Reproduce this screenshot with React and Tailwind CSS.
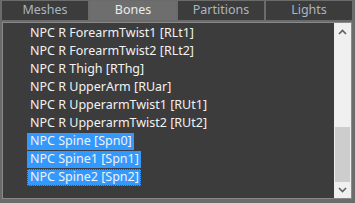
import React from "react";

const rows = [
  { t: "NPC R ForearmTwist1 [RLt1]" },
  { t: "NPC R ForearmTwist2 [RLt2]" },
  { t: "NPC R Thigh [RThg]" },
  { t: "NPC R UpperArm [RUar]" },
  { t: "NPC R UpperarmTwist1 [RUt1]" },
  { t: "NPC R UpperarmTwist2 [RUt2]" },
  { t: "NPC Spine [Spn0]", sel: true },
  { t: "NPC Spine1 [Spn1]", sel: true },
  { t: "NPC Spine2 [Spn2]", sel: true, focus: true },
];

const tabs = ["Meshes", "Bones", "Partitions", "Lights"];

export default function App() {
  return (
    <div
      className="w-[355px] h-[203px] bg-[#6b6b6b] overflow-hidden pl-[2px] pr-[3px] pt-[1px]"
      style={{ fontFamily: '"Segoe UI", "Noto Sans", "Open Sans", sans-serif' }}
    >
      <div className="flex gap-[2px] h-[19px]">
        {tabs.map((t, i) => (
          <div
            key={t}
            className={
              "w-[86px] h-[19px] flex items-center justify-center text-[12.5px] leading-none " +
              (i === 1 ? "bg-[#6e6e6e] text-[#ececec]" : "bg-[#3c3c3c] text-[#aab6c2]")
            }
          >
            {t}
          </div>
        ))}
      </div>
      <div className="mt-[2px] w-[350px] h-[177px] border border-[#8a8a8a] bg-[#3c3c3c] flex">
        <div className="flex-1 flex flex-col pl-[24px] pt-[1px] overflow-hidden">
          {rows.map((r) => (
            <div key={r.t} className="h-[18px] flex items-center">
              <span
                className={
                  "h-[17px] flex items-center pl-[3px] pr-[2px] text-[12.5px] leading-none whitespace-nowrap text-[#f2f2f2] " +
                  (r.sel ? "bg-[#3399ff] " : "") +
                  (r.focus ? "outline outline-1 outline-dotted outline-[#6b4a1a] -outline-offset-1" : "")
                }
              >
                {r.t}
              </span>
            </div>
          ))}
        </div>
        <div className="w-[17px] h-full bg-[#f0f0f0] flex flex-col">
          <div className="h-[17px] flex items-center justify-center">
            <svg width="9" height="6" viewBox="0 0 9 6">
              <path d="M1 5 L4.5 1.5 L8 5" stroke="#606060" strokeWidth="1.6" fill="none" />
            </svg>
          </div>
          <div className="flex-1 flex flex-col justify-end px-[1px]">
            <div className="h-[55px] bg-[#cdcdcd]" />
          </div>
          <div className="h-[16px] flex items-center justify-center">
            <svg width="9" height="6" viewBox="0 0 9 6">
              <path d="M1 1 L4.5 4.5 L8 1" stroke="#606060" strokeWidth="1.6" fill="none" />
            </svg>
          </div>
        </div>
      </div>
    </div>
  );
}
